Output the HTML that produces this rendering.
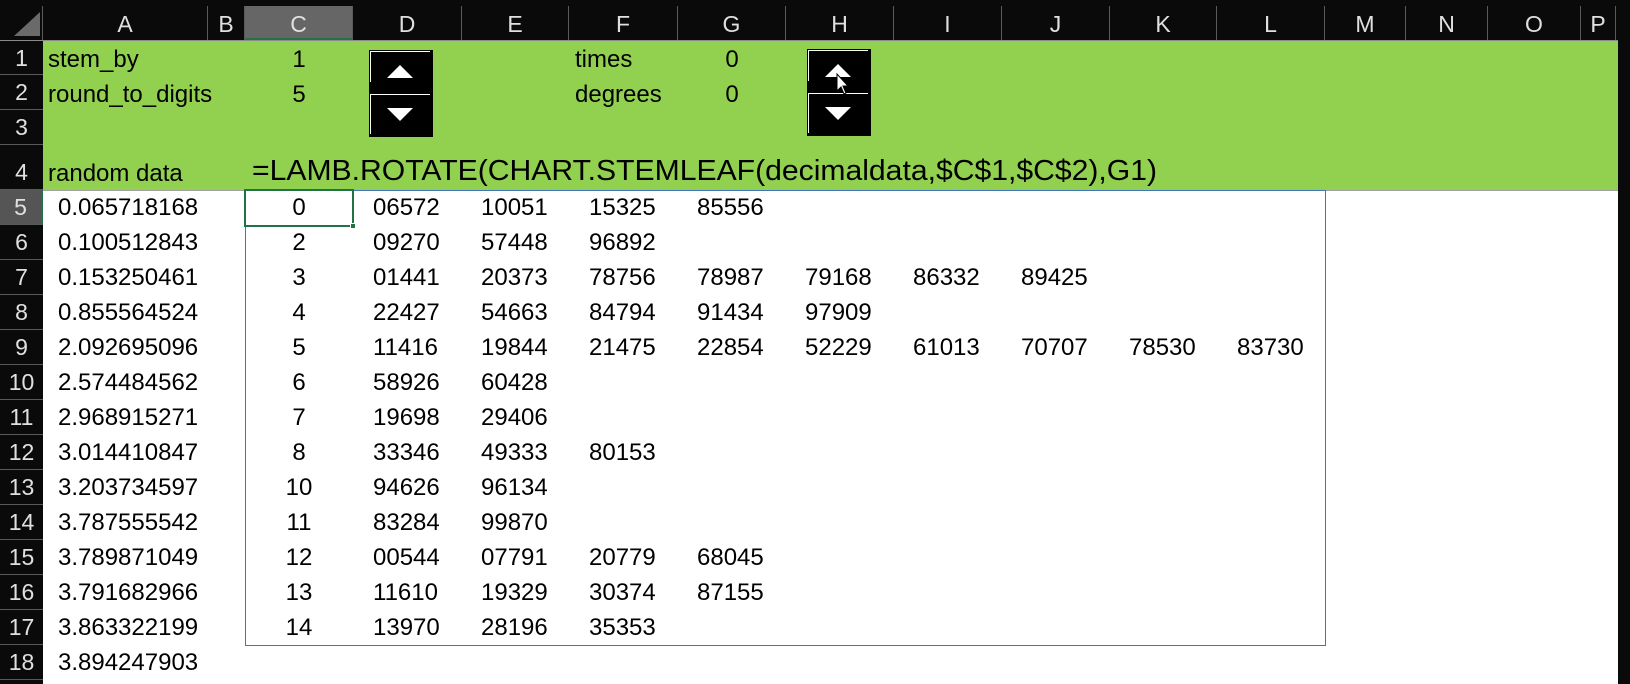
<!DOCTYPE html>
<html><head><meta charset="utf-8"><style>
*{margin:0;padding:0;box-sizing:border-box}
body{width:1630px;height:684px;background:#0a0a0a;position:relative;overflow:hidden;font-family:"Liberation Sans",sans-serif}
.a{position:absolute}
.t{position:absolute;font-size:24px;line-height:35px;height:35px;color:#000;white-space:nowrap}
.c{text-align:center}
.h{position:absolute;top:6px;height:34px;color:#e0e0e0;font-size:23px;line-height:36px;text-align:center;border-right:1px solid #5a5a5a}
.r{position:absolute;left:0;width:43px;color:#e0e0e0;font-size:23px;text-align:center;border-bottom:1px solid #5a5a5a;background:#0a0a0a}
</style></head><body>
<div class="a" style="left:0;top:6px;width:43px;height:34px;border-right:1px solid #5a5a5a"></div>
<svg class="a" style="left:12px;top:10px" width="30" height="28"><polygon points="28,2 28,26 2,26" fill="#6a6a6a"/></svg>
<div class="h" style="left:43px;width:165px">A</div>
<div class="h" style="left:208px;width:37px">B</div>
<div class="h" style="left:245px;width:108px;background:#666;border-bottom:2px solid #217346">C</div>
<div class="h" style="left:353px;width:109px">D</div>
<div class="h" style="left:462px;width:107px">E</div>
<div class="h" style="left:569px;width:109px">F</div>
<div class="h" style="left:678px;width:108px">G</div>
<div class="h" style="left:786px;width:108px">H</div>
<div class="h" style="left:894px;width:108px">I</div>
<div class="h" style="left:1002px;width:108px">J</div>
<div class="h" style="left:1110px;width:107px">K</div>
<div class="h" style="left:1217px;width:108px">L</div>
<div class="h" style="left:1325px;width:81px">M</div>
<div class="h" style="left:1406px;width:82px">N</div>
<div class="h" style="left:1488px;width:93px">O</div>
<div class="h" style="left:1581px;width:35px">P</div>
<div class="a" style="left:0;top:40px;width:1618px;height:1px;background:#8a8a8a"></div>
<div class="a" style="left:43px;top:41px;width:1575px;height:149px;background:#92d050"></div>
<div class="a" style="left:43px;top:190px;width:1575px;height:494px;background:#fff;border-top:1px solid #a0a0a0"></div>
<div class="r" style="top:41px;height:34px;line-height:34px">1</div>
<div class="r" style="top:75px;height:35px;line-height:35px">2</div>
<div class="r" style="top:110px;height:35px;line-height:35px">3</div>
<div class="r" style="top:145px;height:45px;line-height:54px">4</div>
<div class="r" style="top:190px;height:35px;line-height:35px;background:#555;border-right:2px solid #217346">5</div>
<div class="r" style="top:225px;height:35px;line-height:35px">6</div>
<div class="r" style="top:260px;height:35px;line-height:35px">7</div>
<div class="r" style="top:295px;height:35px;line-height:35px">8</div>
<div class="r" style="top:330px;height:35px;line-height:35px">9</div>
<div class="r" style="top:365px;height:35px;line-height:35px">10</div>
<div class="r" style="top:400px;height:35px;line-height:35px">11</div>
<div class="r" style="top:435px;height:35px;line-height:35px">12</div>
<div class="r" style="top:470px;height:35px;line-height:35px">13</div>
<div class="r" style="top:505px;height:35px;line-height:35px">14</div>
<div class="r" style="top:540px;height:35px;line-height:35px">15</div>
<div class="r" style="top:575px;height:35px;line-height:35px">16</div>
<div class="r" style="top:610px;height:35px;line-height:35px">17</div>
<div class="r" style="top:645px;height:35px;line-height:35px">18</div>

<div class="t" style="left:48px;top:42px">stem_by</div>
<div class="t" style="left:48px;top:77px">round_to_digits</div>
<div class="t c" style="left:245px;width:108px;top:42px">1</div>
<div class="t c" style="left:245px;width:108px;top:77px">5</div>
<div class="t" style="left:575px;top:42px">times</div>
<div class="t" style="left:575px;top:77px">degrees</div>
<div class="t c" style="left:678px;width:108px;top:42px">0</div>
<div class="t c" style="left:678px;width:108px;top:77px">0</div>
<div class="t" style="left:48px;top:156px">random data</div>
<svg class="a" style="left:250px;top:146px" width="920" height="44"><text x="2" y="34" font-family="Liberation Sans" font-size="29" textLength="905" lengthAdjust="spacingAndGlyphs">=LAMB.ROTATE(CHART.STEMLEAF(decimaldata,$C$1,$C$2),G1)</text></svg>

<svg class="a" style="left:369px;top:50px" width="64" height="87"><rect x="0" y="0" width="64" height="87" fill="#000"/><path d="M1.5 32V1.5H61M1.5 84V44.5H61" stroke="#fff" stroke-width="1" fill="none"/><polygon points="18,28 44,28 31,15" fill="#fff"/><polygon points="18,58 44,58 31,71" fill="#fff"/></svg>
<svg class="a" style="left:807px;top:49px" width="64" height="87"><rect x="0" y="0" width="64" height="87" fill="#000"/><path d="M1.5 32V1.5H61M1.5 84V44.5H61" stroke="#fff" stroke-width="1" fill="none"/><polygon points="18,28 44,28 31,15" fill="#fff"/><polygon points="18,58 44,58 31,71" fill="#fff"/><path d="M30 25 L30 42 L34 38 L37 45 L39 44 L36 37 L41 37 Z" fill="#fff" stroke="#000" stroke-width="1"/></svg>

<div class="a" style="left:245px;top:190px;width:1081px;height:456px;border:1px solid #4472c4"></div>
<div class="a" style="left:244px;top:189px;width:110px;height:38px;border:2px solid #217346"></div>
<div class="a" style="left:350px;top:223px;width:6px;height:6px;background:#217346;border:1px solid #fff"></div>

<div class="t" style="left:58px;top:190px">0.065718168</div>
<div class="t" style="left:58px;top:225px">0.100512843</div>
<div class="t" style="left:58px;top:260px">0.153250461</div>
<div class="t" style="left:58px;top:295px">0.855564524</div>
<div class="t" style="left:58px;top:330px">2.092695096</div>
<div class="t" style="left:58px;top:365px">2.574484562</div>
<div class="t" style="left:58px;top:400px">2.968915271</div>
<div class="t" style="left:58px;top:435px">3.014410847</div>
<div class="t" style="left:58px;top:470px">3.203734597</div>
<div class="t" style="left:58px;top:505px">3.787555542</div>
<div class="t" style="left:58px;top:540px">3.789871049</div>
<div class="t" style="left:58px;top:575px">3.791682966</div>
<div class="t" style="left:58px;top:610px">3.863322199</div>
<div class="t" style="left:58px;top:645px">3.894247903</div>

<div class="t c" style="left:245px;width:108px;top:190px">0</div>
<div class="t c" style="left:245px;width:108px;top:225px">2</div>
<div class="t c" style="left:245px;width:108px;top:260px">3</div>
<div class="t c" style="left:245px;width:108px;top:295px">4</div>
<div class="t c" style="left:245px;width:108px;top:330px">5</div>
<div class="t c" style="left:245px;width:108px;top:365px">6</div>
<div class="t c" style="left:245px;width:108px;top:400px">7</div>
<div class="t c" style="left:245px;width:108px;top:435px">8</div>
<div class="t c" style="left:245px;width:108px;top:470px">10</div>
<div class="t c" style="left:245px;width:108px;top:505px">11</div>
<div class="t c" style="left:245px;width:108px;top:540px">12</div>
<div class="t c" style="left:245px;width:108px;top:575px">13</div>
<div class="t c" style="left:245px;width:108px;top:610px">14</div>

<div class="t" style="left:373px;top:190px">06572</div><div class="t" style="left:481px;top:190px">10051</div><div class="t" style="left:589px;top:190px">15325</div><div class="t" style="left:697px;top:190px">85556</div>
<div class="t" style="left:373px;top:225px">09270</div><div class="t" style="left:481px;top:225px">57448</div><div class="t" style="left:589px;top:225px">96892</div>
<div class="t" style="left:373px;top:260px">01441</div><div class="t" style="left:481px;top:260px">20373</div><div class="t" style="left:589px;top:260px">78756</div><div class="t" style="left:697px;top:260px">78987</div><div class="t" style="left:805px;top:260px">79168</div><div class="t" style="left:913px;top:260px">86332</div><div class="t" style="left:1021px;top:260px">89425</div>
<div class="t" style="left:373px;top:295px">22427</div><div class="t" style="left:481px;top:295px">54663</div><div class="t" style="left:589px;top:295px">84794</div><div class="t" style="left:697px;top:295px">91434</div><div class="t" style="left:805px;top:295px">97909</div>
<div class="t" style="left:373px;top:330px">11416</div><div class="t" style="left:481px;top:330px">19844</div><div class="t" style="left:589px;top:330px">21475</div><div class="t" style="left:697px;top:330px">22854</div><div class="t" style="left:805px;top:330px">52229</div><div class="t" style="left:913px;top:330px">61013</div><div class="t" style="left:1021px;top:330px">70707</div><div class="t" style="left:1129px;top:330px">78530</div><div class="t" style="left:1237px;top:330px">83730</div>
<div class="t" style="left:373px;top:365px">58926</div><div class="t" style="left:481px;top:365px">60428</div>
<div class="t" style="left:373px;top:400px">19698</div><div class="t" style="left:481px;top:400px">29406</div>
<div class="t" style="left:373px;top:435px">33346</div><div class="t" style="left:481px;top:435px">49333</div><div class="t" style="left:589px;top:435px">80153</div>
<div class="t" style="left:373px;top:470px">94626</div><div class="t" style="left:481px;top:470px">96134</div>
<div class="t" style="left:373px;top:505px">83284</div><div class="t" style="left:481px;top:505px">99870</div>
<div class="t" style="left:373px;top:540px">00544</div><div class="t" style="left:481px;top:540px">07791</div><div class="t" style="left:589px;top:540px">20779</div><div class="t" style="left:697px;top:540px">68045</div>
<div class="t" style="left:373px;top:575px">11610</div><div class="t" style="left:481px;top:575px">19329</div><div class="t" style="left:589px;top:575px">30374</div><div class="t" style="left:697px;top:575px">87155</div>
<div class="t" style="left:373px;top:610px">13970</div><div class="t" style="left:481px;top:610px">28196</div><div class="t" style="left:589px;top:610px">35353</div>
</body></html>
